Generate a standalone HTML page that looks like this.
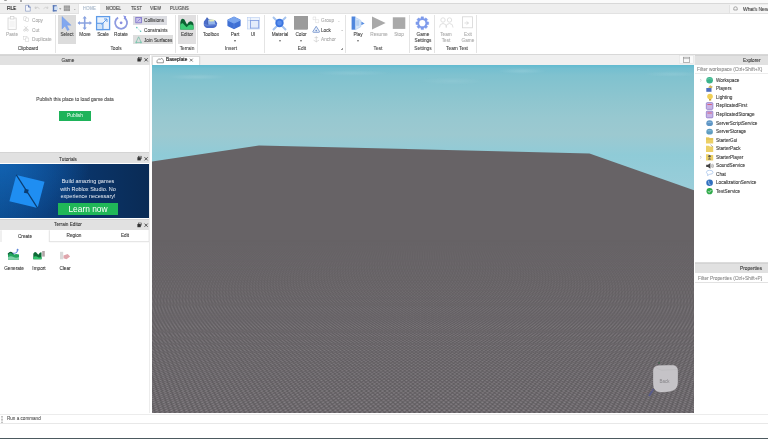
<!DOCTYPE html>
<html><head><meta charset="utf-8">
<style>
*{margin:0;padding:0;box-sizing:border-box}
html,body{width:768px;height:439px;overflow:hidden;background:#fff;font-family:"Liberation Sans",sans-serif;color:#333}
.a{position:absolute}
.t{position:absolute;white-space:nowrap;line-height:1;will-change:transform;-webkit-text-stroke:0.08px currentColor}
.c{transform:translateX(-50%)}
.hdr{position:absolute;background:#e1e1e1;border-top:1px solid #d4d4d4}
.sep{position:absolute;width:1px;top:15px;height:38px;background:#e4e4e4}
.rl{font-size:4.7px;color:#3a3a3a;margin-top:1.5px}
.dis{color:#a9a9a9}
.mn{font-size:5.1px;color:#333;top:6px;transform:scaleX(0.84);transform-origin:0 0}
.gl{font-size:4.8px;color:#444;top:47.2px}
.ex{font-size:4.7px;color:#333}
</style></head><body>
<!-- top strip -->
<div class="a" style="left:0;top:0;width:768px;height:4px;background:#fafafa"></div>
<!-- menu bar -->
<div class="a" style="left:0;top:3px;width:768px;height:10.5px;background:#eeeeee;border-top:0.8px solid #d8d8d8;border-bottom:0.6px solid #e2e2e2"></div>
<div class="a" style="left:79px;top:4px;width:21px;height:10px;background:#fff"></div>
<div class="t mn" style="left:7px;color:#222;-webkit-text-stroke:0.18px #222">FILE</div>
<div class="t mn" style="left:82.5px;color:#9fb0c4">HOME</div>
<div class="t mn" style="left:106px">MODEL</div>
<div class="t mn" style="left:131px">TEST</div>
<div class="t mn" style="left:150px">VIEW</div>
<div class="t mn" style="left:170px">PLUGINS</div>
<div class="a" style="left:729px;top:4.5px;width:39px;height:8.5px;background:#f7f7f7;border-left:0.5px solid #e2e2e2"></div>
<svg class="a" style="left:733px;top:6px" width="6" height="5"><path d="M0.8 4V2.2Q0.8 0.8 2.5 0.8T4.2 2.2V4z" fill="none" stroke="#777" stroke-width="0.6"/></svg>
<div class="t mn" style="left:743px;top:6.8px;font-size:5px;transform:scaleX(0.95)">What's New</div>
<!-- ribbon -->
<div class="a" style="left:0;top:14px;width:768px;height:41px;background:#fff;border-bottom:1px solid #d8d8d8"></div>
<div class="sep" style="left:55px"></div>
<div class="sep" style="left:175px"></div>
<div class="sep" style="left:197px"></div>
<div class="sep" style="left:264px"></div>
<div class="sep" style="left:345px"></div>
<div class="sep" style="left:409px"></div>
<div class="sep" style="left:434px"></div>
<div class="sep" style="left:476px"></div>

<!-- Clipboard -->
<div class="t rl dis c" style="left:12px;top:31.5px">Paste</div>
<div class="t rl dis" style="left:31.5px;top:17.5px">Copy</div>
<div class="t rl dis" style="left:31.5px;top:27px">Cut</div>
<div class="t rl dis" style="left:31.5px;top:36.8px">Duplicate</div>
<div class="t gl c" style="left:28.4px">Clipboard</div>
<!-- Tools -->
<div class="a" style="left:57.5px;top:15px;width:18.3px;height:29.2px;background:#dcdcdc"></div>
<div class="t rl c" style="left:66.8px;top:31.5px">Select</div>
<div class="t rl c" style="left:84.5px;top:31.5px">Move</div>
<div class="t rl c" style="left:103px;top:31.5px">Scale</div>
<div class="t rl c" style="left:121px;top:31.5px">Rotate</div>
<div class="t gl c" style="left:116.3px">Tools</div>
<div class="a" style="left:133px;top:15.5px;width:33.5px;height:9px;background:#dcdde2"></div>
<div class="a" style="left:133px;top:34.5px;width:40px;height:9.5px;background:#dedede"></div>
<div class="t rl" style="left:143.5px;top:17.5px">Collisions</div>
<div class="t rl" style="left:143.5px;top:27.3px">Constraints</div>
<div class="t rl" style="left:143.5px;top:37px">Join Surfaces</div>
<!-- Terrain -->
<div class="a" style="left:178px;top:15px;width:17.8px;height:29.2px;background:#e0dfe0"></div>
<div class="t rl c" style="left:187px;top:31.5px">Editor</div>
<div class="t gl c" style="left:187px">Terrain</div>
<!-- Insert -->
<div class="t rl c" style="left:211px;top:31.5px">Toolbox</div>
<div class="t rl c" style="left:234.5px;top:31.5px">Part</div>
<div class="t rl c" style="left:253px;top:31.5px">UI</div>
<div class="t gl c" style="left:230.7px">Insert</div>
<!-- Edit -->
<div class="t rl c" style="left:279.5px;top:31.5px">Material</div>
<div class="t rl c" style="left:301px;top:31.5px">Color</div>
<div class="a" style="left:294px;top:16.3px;width:13.5px;height:13px;background:#9a9a9a"></div>
<div class="t rl dis" style="left:321px;top:17.8px">Group</div>
<div class="t rl" style="left:321px;top:27.5px">Lock</div>
<div class="t rl dis" style="left:321px;top:36.8px">Anchor</div>
<div class="t gl c" style="left:301.7px">Edit</div>
<!-- Test -->
<div class="t rl c" style="left:358.2px;top:31.5px">Play</div>
<div class="t rl dis c" style="left:379px;top:31.5px">Resume</div>
<div class="t rl dis c" style="left:398.8px;top:31.5px">Stop</div>
<div class="t gl c" style="left:378.4px">Test</div>
<div class="t rl c" style="left:422.7px;top:31.5px">Game</div>
<div class="t rl c" style="left:422.7px;top:37.8px">Settings</div>
<div class="t gl c" style="left:422.7px">Settings</div>
<div class="t rl dis c" style="left:446px;top:31.5px">Team</div>
<div class="t rl dis c" style="left:446px;top:37.8px">Test</div>
<div class="t rl dis c" style="left:467.5px;top:31.5px">Exit</div>
<div class="t rl dis c" style="left:467.5px;top:37.8px">Game</div>
<div class="t gl c" style="left:457px">Team Test</div>


<!-- quick access icons -->
<svg class="a" style="left:0;top:0" width="80" height="14">
 <path d="M25.5 5.3h3.2l1.6 1.6v4.3h-4.8z" fill="#f4f6fb" stroke="#8d9cc4" stroke-width="0.7"/>
 <path d="M28.5 5.3v1.8h1.8" fill="none" stroke="#3d5aa0" stroke-width="0.7"/>
 <path d="M35 8.2q2-2.5 4.5 0.5M35 8.2l0.4-1.6M35 8.2l1.5 0.3" fill="none" stroke="#c2c2c2" stroke-width="0.7"/>
 <path d="M48 8.2q-2-2.5-4.5 0.5M48 8.2l-0.4-1.6M48 8.2l-1.5 0.3" fill="none" stroke="#c8c8c8" stroke-width="0.7"/>
 <rect x="52.8" y="5.2" width="1.6" height="6.2" fill="#5677b8"/>
 <rect x="52.8" y="5.2" width="4" height="1.3" fill="#5677b8"/><rect x="52.8" y="10.1" width="4" height="1.3" fill="#5677b8"/>
 <rect x="54.5" y="6.6" width="3.5" height="3.4" fill="#d2e2f6"/>
 <path d="M59 8.6l1.2 0.9 1.2-0.9z" fill="#666"/>
 <rect x="63.8" y="5.5" width="6.2" height="5.6" fill="#9a9a9a"/>
 <path d="M65.9 5.5v5.6M67.9 5.5v5.6M63.8 8.3h6.2" stroke="#c8c8c8" stroke-width="0.4"/>
 <path d="M74 9l0.8 0.8 0.8-0.8z" fill="#777"/>
 <rect x="78" y="4" width="0.6" height="9" fill="#dedede"/>
</svg>
<!-- top strip bits -->
<div class="a" style="left:4px;top:0;width:3.2px;height:1.4px;background:#999;border-radius:0 0 2px 2px"></div>
<div class="a" style="left:20px;top:0;width:1.5px;height:1.6px;background:#aaa"></div>
<!-- Clipboard icons -->
<svg class="a" style="left:0;top:14px" width="56" height="40">
 <rect x="8" y="4" width="8.2" height="11.6" fill="#fbfbfb" stroke="#cfcfcf" stroke-width="0.7"/>
 <rect x="10.3" y="2.6" width="3.6" height="2.4" fill="#fff" stroke="#c9c9c9" stroke-width="0.6"/>
 <path d="M9.7 8h4.8M9.7 10h4.8M9.7 12h4.8" stroke="#dcdcdc" stroke-width="0.5"/>
 <rect x="23.8" y="2.8" width="2.8" height="3.6" fill="#fff" stroke="#c8c8c8" stroke-width="0.5"/>
 <rect x="25.8" y="4" width="2.8" height="3.6" fill="#fff" stroke="#c8c8c8" stroke-width="0.5"/>
 <path d="M24.5 12.3l3 3.3M27.5 12.3l-3 3.3" stroke="#c4c4c4" stroke-width="0.6"/>
 <circle cx="24.6" cy="16.2" r="1" fill="none" stroke="#bdbdbd" stroke-width="0.5"/><circle cx="27.4" cy="16.2" r="1" fill="none" stroke="#bdbdbd" stroke-width="0.5"/>
 <rect x="23.6" y="22.3" width="3.4" height="3.4" fill="#fff" stroke="#cfcfcf" stroke-width="0.5"/>
 <rect x="25.4" y="24" width="3.4" height="3.4" fill="#fff" stroke="#cfcfcf" stroke-width="0.5"/>
</svg>
<!-- Tools icons -->
<svg class="a" style="left:56px;top:14px" width="75" height="20">
 <path d="M6 2.5v12.5l3-3 2.4 4.6 1.8-0.9-2.4-4.5h4.3z" fill="#82a8ef" stroke="#6d95e6" stroke-width="0.4"/>
 <path d="M28.7 3v12M22.5 9h12.5" stroke="#8aa3e0" stroke-width="1.6"/>
 <path d="M28.7 2l-2.1 2.5h4.2zM28.7 16l-2.1-2.5h4.2zM21.5 9l2.5-2.1v4.2zM36 9l-2.5-2.1v4.2z" fill="#8aa3e0"/>
 <rect x="40.6" y="2.6" width="13" height="13" fill="#eaf2fc" stroke="#5e9be8" stroke-width="1.3"/>
 <rect x="40.6" y="9.3" width="6.3" height="6.3" fill="#d2e4f8" stroke="#5e9be8" stroke-width="1.1"/>
 <path d="M45.5 10.5l5.5-5.5M48 5h3v3" fill="none" stroke="#5e9be8" stroke-width="1"/>
 <path d="M68.1 3.6A6 6 0 1 1 62.1 3.6" fill="none" stroke="#8d9ae0" stroke-width="1.8"/>
 <path d="M67 1.6L70.2 2.2L69.6 5.6z" fill="#8790e4"/>
 <circle cx="65.1" cy="8.8" r="1.4" fill="#8a8fe0"/>
</svg>
<svg class="a" style="left:133px;top:14px" width="12" height="32">
 <rect x="2.8" y="3.4" width="5.6" height="5.4" fill="#c9c3ea" stroke="#7a6fc8" stroke-width="0.8"/>
 <path d="M4.5 7.5l3-3" stroke="#7a6fc8" stroke-width="0.7"/>
 <circle cx="3.8" cy="13.6" r="0.8" fill="#5cc0b8"/><circle cx="7.6" cy="17.2" r="0.8" fill="#5cc0b8"/>
 <path d="M4.4 14.2l2.6 2.4" stroke="#9ad8d2" stroke-width="0.5"/>
 <path d="M5.6 22.8l-2.6 5.6h5.2z" fill="none" stroke="#5bb59a" stroke-width="0.6"/>
 <circle cx="3.3" cy="28.4" r="0.9" fill="#7cc9b0"/><circle cx="7.9" cy="28.4" r="0.9" fill="#7cc9b0"/>
</svg>
<!-- Terrain editor icon -->
<svg class="a" style="left:178px;top:14px" width="18" height="18">
 <path d="M2.3 15.5V8.2Q3 4.8 4.8 4.8Q6.5 4.8 7.8 8.2L9 10.5Q10.8 7 12.8 7.2Q14.8 7.4 15.5 10V15.5z" fill="#0b6232"/>
 <path d="M2.3 15.5V11Q3.5 8.6 4.8 9.3L8.6 13.2Q10.5 10.3 12.8 10.4Q14.8 10.6 15.5 12.2V15.5z" fill="#3ccb75"/>
</svg>
<!-- Insert icons -->
<svg class="a" style="left:200px;top:14px" width="64" height="18">
 <path d="M3.9 7.5L7 3.5L9 5.2L14.5 6.3L15.6 6.8L17.2 9.3Q17.2 13.5 13.2 14L7 13.9Q3.9 13.2 3.7 10z" fill="#4b6dca"/>
 <path d="M7.4 5.6L14.6 7.1L15.4 10.2L8.2 10.8z" fill="#93b4ea"/>
 <path d="M8.8 5.4L13.6 5.6L14.8 7.2L9.8 7.4z" fill="#e2eab6"/>
 <path d="M4.2 10.6Q8 12 16.8 10.4" fill="none" stroke="#7d9ee0" stroke-width="0.6"/>
 <path d="M7 3.5L8 10.8" stroke="#34509e" stroke-width="0.6"/>
 <path d="M34 3.4L39.8 6.2V11.6L34 14.4L28.2 11.6V6.2z" fill="#3f70d4" stroke="#3f70d4" stroke-width="1.6" stroke-linejoin="round"/>
 <path d="M34 3.4L39.8 6.2L34 9L28.2 6.2z" fill="#7aa6ee" stroke="#7aa6ee" stroke-width="1.2" stroke-linejoin="round"/>
 <path d="M34 9.3V14.4" stroke="#5a88e0" stroke-width="0.6"/>
 <rect x="47.6" y="3.6" width="12" height="11.4" fill="#eef4fd" stroke="#b6cbef" stroke-width="0.6"/>
 <path d="M47.6 6.5h12M50.5 3.6v11.4" stroke="#b6cbef" stroke-width="0.6"/>
 <rect x="50.5" y="6.5" width="8.2" height="7.6" fill="#e3ecfb" stroke="#7d9be0" stroke-width="0.8"/>
</svg>
<div class="t rl c" style="left:234.5px;top:37.2px;font-size:4px;color:#666">&#9662;</div>
<!-- Edit icons -->
<svg class="a" style="left:270px;top:14px" width="76" height="32">
 <path d="M3 3l6 6M16 3l-6 6M3 16l6-6M16 16l-6-6" stroke="#a6c4ee" stroke-width="2"/>
 <circle cx="9.5" cy="9" r="4.2" fill="#3a74e0"/>
 <circle cx="9.5" cy="9" r="2.4" fill="#5b8fec"/>
 <rect x="24" y="2.2" width="13.6" height="13.5" fill="#9b9b9b"/>
 <rect x="43" y="3" width="2.6" height="2.6" fill="none" stroke="#bdbdbd" stroke-width="0.5" stroke-dasharray="0.6 0.4"/>
 <rect x="45.6" y="5.6" width="3" height="3" fill="none" stroke="#bdbdbd" stroke-width="0.5" stroke-dasharray="0.6 0.4"/>
 <path d="M68 7.2l0.9 0.8 0.9-0.8z" fill="#bbb"/>
 <path d="M46.2 12.3l-3.3 5.2q-0.3 0.8 0.5 0.8h5.6q0.8 0 0.5-0.8z" fill="#e8f0fb" stroke="#6b8cc8" stroke-width="0.8"/>
 <circle cx="46.2" cy="16.6" r="0.8" fill="#6b8cc8"/>
 <path d="M71.2 16.3l0.9 0.8 0.9-0.8z" fill="#888"/>
 <path d="M46.3 22v6.2M44.5 23.6h3.6M43.6 26.2q2.7 3 5.4 0" fill="none" stroke="#c6c6c6" stroke-width="0.6"/>
 <path d="M71.2 33.6l1.2 0 0-1.2" fill="none" stroke="#999" stroke-width="0.5"/>
</svg>
<div class="t rl c" style="left:279.5px;top:37.2px;font-size:4px;color:#777">&#9662;</div>
<div class="t rl c" style="left:301px;top:37.2px;font-size:4px;color:#777">&#9662;</div>
<div class="a" style="left:341px;top:48px;width:2.2px;height:2.2px;border-right:0.6px solid #999;border-bottom:0.6px solid #999"></div>
<!-- Test icons -->
<svg class="a" style="left:348px;top:14px" width="62" height="18">
 <rect x="3.6" y="2.5" width="3.8" height="13.2" fill="#4f86dd"/>
 <path d="M7.4 3.4l5.4 3v6.4l-5.4 3z" fill="#d5e5f8" stroke="#9cc0ee" stroke-width="0.5"/>
 <rect x="8.2" y="6.2" width="3" height="5.6" fill="#b4d0f3"/>
 <path d="M13.3 7.6l3.3 1.8-3.3 1.8z" fill="#5a8fe2"/>
 <path d="M24 2.4v13l13.6-6.5z" fill="#a9a9a9"/>
 <rect x="44.8" y="3.3" width="12.5" height="11.6" fill="#a9a9a9"/>
</svg>
<div class="t rl c" style="left:358px;top:37.2px;font-size:4px;color:#777">&#9662;</div>
<svg class="a" style="left:414px;top:14px" width="18" height="18">
 <g transform="translate(8.3 9.2)">
  <path d="M4.69 -1.43 L6.38 -1.24 L6.38 1.24 L4.69 1.43 L4.33 2.30 L5.39 3.63 L3.63 5.39 L2.30 4.33 L1.43 4.69 L1.24 6.38 L-1.24 6.38 L-1.43 4.69 L-2.30 4.33 L-3.63 5.39 L-5.39 3.63 L-4.33 2.30 L-4.69 1.43 L-6.38 1.24 L-6.38 -1.24 L-4.69 -1.43 L-4.33 -2.30 L-5.39 -3.63 L-3.63 -5.39 L-2.30 -4.33 L-1.43 -4.69 L-1.24 -6.38 L1.24 -6.38 L1.43 -4.69 L2.30 -4.33 L3.63 -5.39 L5.39 -3.63 L4.33 -2.30Z" fill="#7d9aeb" stroke="#7d9aeb" stroke-width="0.4" stroke-linejoin="round"/>
  <circle r="3.1" fill="#fff"/>
 </g>
</svg>
<svg class="a" style="left:436px;top:14px" width="40" height="18">
 <circle cx="7" cy="6" r="2.2" fill="none" stroke="#dcdcdc" stroke-width="0.9"/>
 <circle cx="13.5" cy="6" r="2.2" fill="none" stroke="#dcdcdc" stroke-width="0.9"/>
 <path d="M3.5 13.5q0-4 3.5-4t3.5 4M10 13.5q0-4 3.5-4t3.5 4" fill="none" stroke="#dcdcdc" stroke-width="0.9"/>
 <rect x="26.5" y="2.8" width="10" height="11" fill="none" stroke="#d6d6d6" stroke-width="0.8"/>
 <path d="M28.5 9h4M30.5 7.4l2 1.6-2 1.6" fill="none" stroke="#d0d0d0" stroke-width="0.7"/>
</svg>

<!-- left column -->
<div class="hdr" style="left:0;top:55px;width:150px;height:10px"></div>
<div class="t ex c" style="left:68px;top:58.9px">Game</div>
<div class="a" style="left:0;top:65px;width:150px;height:87px;background:#fff"></div>
<div class="t c" style="left:74.9px;top:97.7px;font-size:4.82px;color:#444">Publish this place to load game data</div>
<div class="a" style="left:59.1px;top:111.3px;width:31.8px;height:9.4px;background:#1eb35a"></div>
<div class="t c" style="left:75px;top:113.6px;font-size:4.9px;color:#f4fff8;-webkit-text-stroke:0">Publish</div>
<div class="hdr" style="left:0;top:152px;width:150px;height:11px"></div>
<div class="t ex c" style="left:67.7px;top:157.8px">Tutorials</div>
<div class="a" style="left:0;top:163.6px;width:149px;height:54.4px;background:radial-gradient(ellipse 90px 60px at 0px 0px,rgba(18,100,180,0.9),rgba(18,100,180,0)),linear-gradient(90deg,#0c4c90 0%,#0b4080 30%,#0a3468 60%,#0a2b55 100%)"></div>
<svg class="a" style="left:0;top:163px" width="60" height="55">
 <polygon points="16.3,11.9 44.5,18.8 37.6,45.1 9.4,38.2" fill="#1f8ef2"/>
 <path d="M16.3 11.9L37.6 45.1" stroke="#0b3d72" stroke-width="1.2"/>
 <rect x="24.3" y="26.2" width="4" height="4" fill="#0b3d72" transform="rotate(14 26.3 28.2)"/>
</svg>
<div class="t c" style="left:88px;top:179px;font-size:5.5px;color:#eef2f8;-webkit-text-stroke:0">Build amazing games</div>
<div class="t c" style="left:88px;top:186.5px;font-size:5.5px;color:#eef2f8;-webkit-text-stroke:0">with Roblox Studio. No</div>
<div class="t c" style="left:88px;top:194px;font-size:5.5px;color:#eef2f8;-webkit-text-stroke:0">experience necessary!</div>
<div class="a" style="left:58px;top:203px;width:60px;height:12px;background:#20b758"></div>
<div class="t c" style="left:88px;top:205px;font-size:8.4px;color:#fff;-webkit-text-stroke:0">Learn now</div>
<div class="hdr" style="left:0;top:219px;width:150px;height:11px"></div>
<div class="t ex c" style="left:68px;top:223.3px">Terrain Editor</div>
<div class="t ex c" style="left:24.7px;top:234.8px">Create</div>
<div class="t ex c" style="left:74px;top:234px">Region</div>
<div class="t ex c" style="left:124.8px;top:234px">Edit</div>
<div class="t ex c" style="left:13.5px;top:266.6px">Generate</div>
<div class="t ex c" style="left:39px;top:266.6px">Import</div>
<div class="t ex c" style="left:64.5px;top:266.6px">Clear</div>

<!-- viewport -->
<div class="a" style="left:150.5px;top:55px;width:545px;height:10px;background:#f0f0f0"></div>
<div class="a" style="left:152px;top:56.2px;width:48px;height:8.8px;background:#fff;border:0.5px solid #dcdcdc;border-bottom:none"></div>
<div class="t" style="left:165.6px;top:58px;font-size:4.8px;color:#222;-webkit-text-stroke:0.15px #222">Baseplate</div>
<div class="a" style="left:151.5px;top:65px;width:542.5px;height:348px;overflow:hidden;background:linear-gradient(#60bad0 0%,#74bfd0 1%,#80c2cf 3%,#8cc5cf 9%,#97c8d0 15%,#9cc9d0 20%,#96cad4 23%,#8fcbd7 26%,#99cdd9 35%,#a0cfda 60%)">
  <div style="position:absolute;left:0;top:0;width:542px;height:30px;background:radial-gradient(ellipse 30px 3px at 45px 12px,rgba(255,255,255,0.12),rgba(255,255,255,0)),radial-gradient(ellipse 40px 3px at 200px 8px,rgba(255,255,255,0.1),rgba(255,255,255,0)),radial-gradient(ellipse 25px 3px at 370px 6px,rgba(255,255,255,0.14),rgba(255,255,255,0)),radial-gradient(ellipse 30px 3px at 520px 9px,rgba(255,255,255,0.1),rgba(255,255,255,0)),radial-gradient(ellipse 35px 4px at 300px 16px,rgba(255,255,255,0.08),rgba(255,255,255,0))"></div>
  <svg width="542" height="348" style="position:absolute;left:0;top:0">
    <polygon points="0,96.5 107,80.5 437.5,88.5 543,125.5 543,348 0,348" fill="#676366"/>
  </svg>
  <div style="position:absolute;left:0;top:0;width:543px;height:348px;perspective:506px;perspective-origin:271px 129px;overflow:hidden;-webkit-mask-image:linear-gradient(rgba(0,0,0,0) 0,rgba(0,0,0,0) 175px,rgba(0,0,0,0.6) 260px,#000 348px)">
    <div style="position:absolute;left:-1500px;top:-752px;width:3543px;height:1100px;transform-origin:50% 100%;transform:rotateX(80deg);background:radial-gradient(ellipse 2.4px 3.4px,rgba(140,136,140,0.95) 0,rgba(124,120,124,0.7) 45%,rgba(86,82,86,0.55) 80%,rgba(86,82,86,0) 100%) 0 0/5px 7px,radial-gradient(ellipse 2.4px 3.4px,rgba(140,136,140,0.95) 0,rgba(124,120,124,0.7) 45%,rgba(86,82,86,0.55) 80%,rgba(86,82,86,0) 100%) 2.5px 3.5px/5px 7px,#696569"></div>
  </div>
</div>

<!-- right column -->
<div class="hdr" style="left:695px;top:55px;width:73px;height:10px"></div>
<div class="t ex" style="left:742.7px;top:58.9px">Explorer</div>
<div class="t" style="left:697px;top:68.2px;font-size:4.8px;color:#888">Filter workspace (Ctrl+Shift+X)</div>
<div class="t ex" style="left:716px;top:78.8px">Workspace</div>
<div class="t ex" style="left:716px;top:87.3px">Players</div>
<div class="t ex" style="left:716px;top:95.8px">Lighting</div>
<div class="t ex" style="left:716px;top:104.4px">ReplicatedFirst</div>
<div class="t ex" style="left:716px;top:112.9px">ReplicatedStorage</div>
<div class="t ex" style="left:716px;top:121.5px">ServerScriptService</div>
<div class="t ex" style="left:716px;top:130.0px">ServerStorage</div>
<div class="t ex" style="left:716px;top:138.6px">StarterGui</div>
<div class="t ex" style="left:716px;top:147.1px">StarterPack</div>
<div class="t ex" style="left:716px;top:155.7px">StarterPlayer</div>
<div class="t ex" style="left:716px;top:164.2px">SoundService</div>
<div class="t ex" style="left:716px;top:172.8px">Chat</div>
<div class="t ex" style="left:716px;top:181.3px">LocalizationService</div>
<div class="t ex" style="left:716px;top:189.8px">TestService</div>
<div class="hdr" style="left:695px;top:263.3px;width:73px;height:10px"></div>
<div class="t ex" style="left:739.7px;top:267.2px;font-size:4.85px">Properties</div>
<div class="t" style="left:697.6px;top:276.8px;font-size:4.8px;color:#888">Filter Properties (Ctrl+Shift+P)</div>
<div class="a" style="left:695px;top:282px;width:73px;height:0.6px;background:#e2e2e2"></div>
<div class="a" style="left:695px;top:73.4px;width:73px;height:0.6px;background:#ececec"></div>
<div class="a" style="left:695px;top:262px;width:73px;height:0.6px;background:#dcdcdc"></div>


<!-- panel header icons -->
<svg class="a" style="left:0;top:0" width="768" height="439">
 <g fill="#333">
  <rect x="137.4" y="58.3" width="3.4" height="3.2"/><rect x="138.4" y="57.3" width="3.2" height="2.6" fill="none" stroke="#333" stroke-width="0.5"/>
  <rect x="137.4" y="157.2" width="3.4" height="3.2"/><rect x="138.4" y="156.2" width="3.2" height="2.6" fill="none" stroke="#333" stroke-width="0.5"/>
  <rect x="137.4" y="224" width="3.4" height="3.2"/><rect x="138.4" y="223" width="3.2" height="2.6" fill="none" stroke="#333" stroke-width="0.5"/>
 </g>
 <g stroke="#333" stroke-width="0.8">
  <path d="M144.5 58.2l3.2 3.2M147.7 58.2l-3.2 3.2"/>
  <path d="M144.5 157.2l3.2 3.2M147.7 157.2l-3.2 3.2"/>
  <path d="M144.5 223.6l3.2 3.2M147.7 223.6l-3.2 3.2"/>
 </g>
 <!-- terrain tabs -->
 <path d="M1 242V230.3M49.3 230.3V242" fill="none" stroke="#cfcfcf" stroke-width="0.6"/>
 <path d="M49.5 241.7H150" stroke="#d2d2d2" stroke-width="0.7"/>
 <path d="M148.8 230v12" stroke="#dedede" stroke-width="0.5"/>
 <!-- terrain icons -->
 <path d="M8 259.8v-5.5q2-3 4-1.5l2 1.8q2-1 5 0v5.2z" fill="#21a45e"/>
 <path d="M8 259.8v-2.8q3-1.6 5.5 0t5.5 0v2.8z" fill="#7ed0a8"/>
 <path d="M8 254.4q2-3 4-1.5l1.5 1.3" fill="none" stroke="#0b5a33" stroke-width="1.2"/>
 <path d="M12.8 253.2q4.6 0.6 4.8-3.4" fill="none" stroke="#5f86d8" stroke-width="1.1"/>
 <path d="M16.2 250.2l1.4-1.8 1.4 1.8z" fill="#5f86d8"/>
 <path d="M33.3 259.3v-5.5q1.5-3 3-1.2l2 2.2q1.5-3 3.2-2.4v6.9z" fill="#0e6b37"/>
 <path d="M33.3 259.3v-2.3q2.5-1.5 4.5 0t3.7-0.6v2.9z" fill="#33c46e"/>
 <path d="M42.2 251h2.6v5.6h-2.6z" fill="#b0a4a6"/>
 <path d="M60 259.3v-7.5h3.2v7.5z" fill="#d9d9d9"/>
 <path d="M63.5 255.5l4.2-1.5 2.4 2.6-3.6 2.6-3-1z" fill="#e0a5ac"/>
 <!-- viewport tab -->
 <path d="M152 64.5V56.2H200V64.5" fill="none" stroke="#d8d8d8" stroke-width="0.5"/>
 <path d="M157 62.8h6.4v-2.4l-1.6-2.2-1.6 1.2-1.5-0.6-1.7 2z" fill="none" stroke="#555" stroke-width="0.6"/>
 <path d="M189.9 58.7l2.8 2.8M192.7 58.7l-2.8 2.8" stroke="#444" stroke-width="0.7"/>
 <rect x="679.5" y="55.6" width="14" height="8" fill="#fafafa" stroke="#e0e0e0" stroke-width="0.5"/>
 <rect x="683.3" y="57.2" width="6.4" height="5.2" fill="none" stroke="#8a8a8a" stroke-width="0.6"/>
 <path d="M683.3 58.6h6.4" stroke="#8a8a8a" stroke-width="0.5"/>
 <!-- explorer icons -->
 <path d="M700 79l1.4 1.3-1.4 1.3" fill="none" stroke="#b8b8b8" stroke-width="0.5"/>
 <path d="M700 156l1.4 1.3-1.4 1.3" fill="none" stroke="#a0a0a0" stroke-width="0.5"/>
 <circle cx="709.6" cy="80.2" r="3.3" fill="#3bb38b"/>
 <path d="M707 79.2q2.5-1.2 5 0" stroke="#8fe0c3" stroke-width="0.5" fill="none"/>
 <rect x="706.3" y="88" width="5.2" height="3.8" fill="#4f6fbf"/>
 <path d="M708 87.5l2.2-2.3 2.6 1.5-1.2 1.6z" fill="#d4b75a"/>
 <circle cx="710" cy="96.5" r="2.8" fill="#f0cf55"/>
 <path d="M709 99h2.2v1.6h-2.2z" fill="#c9a640"/>
 <rect x="706.3" y="102.6" width="6.6" height="6.8" rx="1" fill="#c7b5e6" stroke="#7b62c0" stroke-width="0.6"/>
 <path d="M707.4 104.5h4.5" stroke="#d84a6a" stroke-width="0.8"/>
 <rect x="706.3" y="111.1" width="6.6" height="6.8" rx="1" fill="#c7b5e6" stroke="#7b62c0" stroke-width="0.6"/>
 <path d="M707.4 113h4.5" stroke="#d84a6a" stroke-width="0.8"/>
 <path d="M706.3 123.5q0-3.2 3.3-3.2t3.3 3.2q0 2.6-3.3 2.6t-3.3-2.6z" fill="#5e95c4"/>
 <path d="M707.6 122.3h4" stroke="#a8d0ee" stroke-width="0.6"/>
 <path d="M706.3 132q0-3.2 3.3-3.2t3.3 3.2q0 2.6-3.3 2.6t-3.3-2.6z" fill="#5e9cc0"/>
 <path d="M707.6 130.8h4" stroke="#a8d4ea" stroke-width="0.6"/>
 <path d="M706 137.2h3l0.8 0.8h3.4v5.4h-7.2z" fill="#ecd066"/><path d="M706 139h7.2" stroke="#c8a43c" stroke-width="0.5"/>
 <path d="M706 145.7h3l0.8 0.8h3.4v5.4h-7.2z" fill="#ecd066"/><path d="M710.5 144.6l2.5 2.4" stroke="#888" stroke-width="0.6"/>
 <path d="M706 154.3h3l0.8 0.8h3.4v5.4h-7.2z" fill="#ecd066"/><circle cx="709.5" cy="156.3" r="1.2" fill="#555"/><path d="M707.8 159.6q1.7-2.5 3.4 0" fill="#555"/>
 <path d="M706.2 164.8h1.8l2.4-1.8v5.8l-2.4-1.8h-1.8z" fill="#444"/><path d="M711.5 164.5q1 1.4 0 2.8M712.6 163.8q1.6 2.1 0 4.2" stroke="#555" stroke-width="0.5" fill="none"/>
 <path d="M706.4 172.3q0-2 3.3-2t3.3 2-3.3 2l-2.2 1.3 0.4-1.6q-1.5-0.6-1.5-1.7z" fill="#fff" stroke="#8fb4e4" stroke-width="0.6"/>
 <circle cx="709.6" cy="182.7" r="3.3" fill="#2f6fbf"/>
 <path d="M707.6 180.6q1.6 0.4 1.2 2t1.8 2.3" stroke="#e6f0fb" stroke-width="0.6" fill="none"/>
 <circle cx="709.6" cy="191.2" r="3.1" fill="#2faa4a"/>
 <path d="M708 191.2l1.2 1.2 2.2-2.4" stroke="#fff" stroke-width="0.7" fill="none"/>
</svg>
<!-- gizmo -->
<svg class="a" style="left:640px;top:355px" width="50" height="45">
 <path d="M13.5 16q0-5 5-5.2l13-0.4q6-0.2 6 4.8v12q0 8-8 9l-7 0.7q-9 0.6-9-8z" fill="#c5c3c7" stroke="#d8d6da" stroke-width="0.5"/>
 <path d="M15.5 12.5l6 2.8 16-0.8" fill="none" stroke="#b4b2b6" stroke-width="0.4"/>
 <text x="24.5" y="28.4" font-size="4.5" text-anchor="middle" fill="#858387" font-family="Liberation Sans">Back</text>
 <path d="M13.5 34l-4.5 7" stroke="#50558f" stroke-width="2" stroke-opacity="0.8"/><path d="M13 35l-10 3" stroke="#8a6a6a" stroke-width="0.6" stroke-opacity="0.5"/>
 <circle cx="19" cy="7.8" r="0.9" fill="#40604c"/>
</svg>

<div class="a" style="left:149.3px;top:65px;width:0.6px;height:348px;background:#ececec"></div>
<!-- command bar -->
<div class="a" style="left:0;top:413px;width:768px;height:1px;background:#fff"></div>
<div class="a" style="left:0;top:414px;width:768px;height:0.7px;background:#ececec"></div>
<div class="a" style="left:0;top:423px;width:768px;height:0.7px;background:#e8e8e8"></div>
<div class="t" style="left:7px;top:416.8px;font-size:4.6px;color:#555">Run a command</div>
<svg class="a" style="left:0;top:414px" width="5" height="10"><path d="M2 2v7" stroke="#555" stroke-width="0.9" stroke-dasharray="0.8 0.7"/></svg>
<div class="a" style="left:0;top:437.6px;width:768px;height:1.4px;background:#4d5a60"></div>
</body></html>
